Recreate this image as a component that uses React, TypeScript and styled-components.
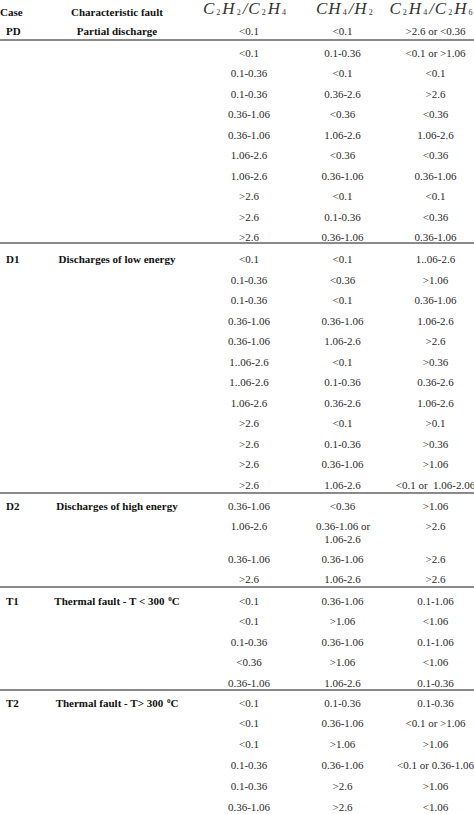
import React from "react";
import styled, { createGlobalStyle } from "styled-components";

const Global = createGlobalStyle`
  html, body { margin: 0; padding: 0; background: #ffffff; overflow: hidden; }
  #root { width: 474px; overflow: hidden; }
`;

const COLS = "52px 130px 134px 53px 133px";

const Page = styled.div`
  width: 474px;
  overflow: hidden;
  font-family: "Liberation Serif", "Times New Roman", serif;
  color: #222;
  background: #fff;
`;

const Table = styled.div`
  width: 502px;
  display: flex;
  flex-direction: column;
`;

const HeaderRow = styled.div`
  display: grid;
  grid-template-columns: ${COLS};
  height: 18.25px;
  overflow: visible;
`;

const HeaderLabel = styled.div<{ $align?: "left" | "center" }>`
  font-size: 11px;
  font-weight: bold;
  color: #111;
  line-height: 14px;
  padding-top: 4.5px;
  text-align: ${(p) => p.$align ?? "center"};
  white-space: nowrap;
`;

const Formula = styled.div`
  font-size: 17px;
  font-style: italic;
  line-height: 18.25px;
  color: #333;
  text-align: center;
  padding-right: 7px;
  white-space: nowrap;
  letter-spacing: 1px;
`;

const Sub = styled.span`
  font-size: 8px;
  font-style: normal;
  line-height: 0;
  vertical-align: -1px;
  letter-spacing: 0;
  margin: 0 2px 0 1px;
`;

const Group = styled.div<{ $lead: number; $pitch: number; $tail: number; $line: boolean }>`
  display: flex;
  flex-direction: column;
  border-bottom: ${(p) => (p.$line ? "2px solid #8a8a8a" : "none")};
  & > div {
    padding-top: ${(p) => p.$pitch - 13.5}px;
  }
  & > div:first-child {
    padding-top: ${(p) => p.$lead}px;
  }
  & > div:last-child {
    margin-bottom: ${(p) => -p.$tail}px;
  }
`;

const Row = styled.div`
  display: grid;
  grid-template-columns: ${COLS};
  line-height: 13.5px;
  font-size: 11px;
`;

const CaseCell = styled.div`
  font-weight: bold;
  color: #111;
  padding-left: 6px;
  white-space: nowrap;
`;

const FaultCell = styled.div`
  font-weight: bold;
  color: #111;
  text-align: center;
  white-space: nowrap;
`;

const ValueCell = styled.div`
  text-align: center;
  white-space: nowrap;
  color: #2a2a2a;
`;

const Sup = styled.sup`
  font-size: 7px;
  line-height: 0;
  vertical-align: 4px;
  margin-left: 1px;
`;

type Vals = [string, string, string];

interface GroupData {
  code?: string;
  fault?: React.ReactNode;
  rows: Vals[];
  lead: number;
  pitch: number;
  tail: number;
  line: boolean;
}

const groups: GroupData[] = [
  {
    code: "PD",
    fault: "Partial discharge",
    rows: [["<0.1", "<0.1", ">2.6 or <0.36"]],
    lead: 7,
    pitch: 20.5,
    tail: 0,
    line: true,
  },
  {
    rows: [
      ["<0.1", "0.1-0.36", "<0.1 or >1.06"],
      ["0.1-0.36", "<0.1", "<0.1"],
      ["0.1-0.36", "0.36-2.6", ">2.6"],
      ["0.36-1.06", "<0.36", "<0.36"],
      ["0.36-1.06", "1.06-2.6", "1.06-2.6"],
      ["1.06-2.6", "<0.36", "<0.36"],
      ["1.06-2.6", "0.36-1.06", "0.36-1.06"],
      [">2.6", "<0.1", "<0.1"],
      [">2.6", "0.1-0.36", "<0.36"],
      [">2.6", "0.36-1.06", "0.36-1.06"],
    ],
    lead: 6,
    pitch: 20.5,
    tail: 2.5,
    line: true,
  },
  {
    code: "D1",
    fault: "Discharges of low energy",
    rows: [
      ["<0.1", "<0.1", "1..06-2.6"],
      ["0.1-0.36", "<0.36", ">1.06"],
      ["0.1-0.36", "<0.1", "0.36-1.06"],
      ["0.36-1.06", "0.36-1.06", "1.06-2.6"],
      ["0.36-1.06", "1.06-2.6", ">2.6"],
      ["1..06-2.6", "<0.1", ">0.36"],
      ["1..06-2.6", "0.1-0.36", "0.36-2.6"],
      ["1.06-2.6", "0.36-2.6", "1.06-2.6"],
      [">2.6", "<0.1", ">0.1"],
      [">2.6", "0.1-0.36", ">0.36"],
      [">2.6", "0.36-1.06", ">1.06"],
      [">2.6", "1.06-2.6", "<0.1 or\u00a0 1.06-2.06"],
    ],
    lead: 9,
    pitch: 20.5,
    tail: 0,
    line: true,
  },
  {
    code: "D2",
    fault: "Discharges of high energy",
    rows: [
      ["0.36-1.06", "<0.36", ">1.06"],
      ["1.06-2.6", "0.36-1.06 or\n1.06-2.6", ">2.6"],
      ["0.36-1.06", "0.36-1.06", ">2.6"],
      [">2.6", "1.06-2.6", ">2.6"],
    ],
    lead: 5.3,
    pitch: 20,
    tail: 1,
    line: true,
  },
  {
    code: "T1",
    fault: (
      <>
        Thermal fault - T &lt; 300 <Sup>0</Sup>C
      </>
    ),
    rows: [
      ["<0.1", "0.36-1.06", "0.1-1.06"],
      ["<0.1", ">1.06", "<1.06"],
      ["0.1-0.36", "0.36-1.06", "0.1-1.06"],
      ["<0.36", ">1.06", "<1.06"],
      ["0.36-1.06", "1.06-2.6", "0.1-0.36"],
    ],
    lead: 7.4,
    pitch: 20.4,
    tail: 1,
    line: true,
  },
  {
    code: "T2",
    fault: (
      <>
        Thermal fault - T&gt; 300 <Sup>0</Sup>C
      </>
    ),
    rows: [
      ["<0.1", "0.1-0.36", "0.1-0.36"],
      ["<0.1", "0.36-1.06", "<0.1 or >1.06"],
      ["<0.1", ">1.06", ">1.06"],
      ["0.1-0.36", "0.36-1.06", "<0.1 or 0.36-1.06"],
      ["0.1-0.36", ">2.6", ">1.06"],
      ["0.36-1.06", ">2.6", "<1.06"],
    ],
    lead: 5.5,
    pitch: 20.85,
    tail: 0,
    line: false,
  },
];

const renderValue = (v: string) =>
  v.split("\n").map((p, i) => (
    <React.Fragment key={i}>
      {i > 0 && <br />}
      {p}
    </React.Fragment>
  ));

export default function App() {
  return (
    <Page>
      <Global />
      <Table>
        <HeaderRow>
          <HeaderLabel $align="left">Case</HeaderLabel>
          <HeaderLabel>Characteristic fault</HeaderLabel>
          <Formula>
            C<Sub>2</Sub>H<Sub>2</Sub>/C<Sub>2</Sub>H<Sub>4</Sub>
          </Formula>
          <Formula>
            CH<Sub>4</Sub>/H<Sub>2</Sub>
          </Formula>
          <Formula>
            C<Sub>2</Sub>H<Sub>4</Sub>/C<Sub>2</Sub>H<Sub>6</Sub>
          </Formula>
        </HeaderRow>
        {groups.map((g, gi) => (
          <Group key={gi} $lead={g.lead} $pitch={g.pitch} $tail={g.tail} $line={g.line}>
            {g.rows.map((r, ri) => (
              <Row key={ri}>
                <CaseCell>{ri === 0 ? g.code : ""}</CaseCell>
                <FaultCell>{ri === 0 ? g.fault : ""}</FaultCell>
                <ValueCell>{renderValue(r[0])}</ValueCell>
                <ValueCell>{renderValue(r[1])}</ValueCell>
                <ValueCell>{renderValue(r[2])}</ValueCell>
              </Row>
            ))}
          </Group>
        ))}
      </Table>
    </Page>
  );
}
